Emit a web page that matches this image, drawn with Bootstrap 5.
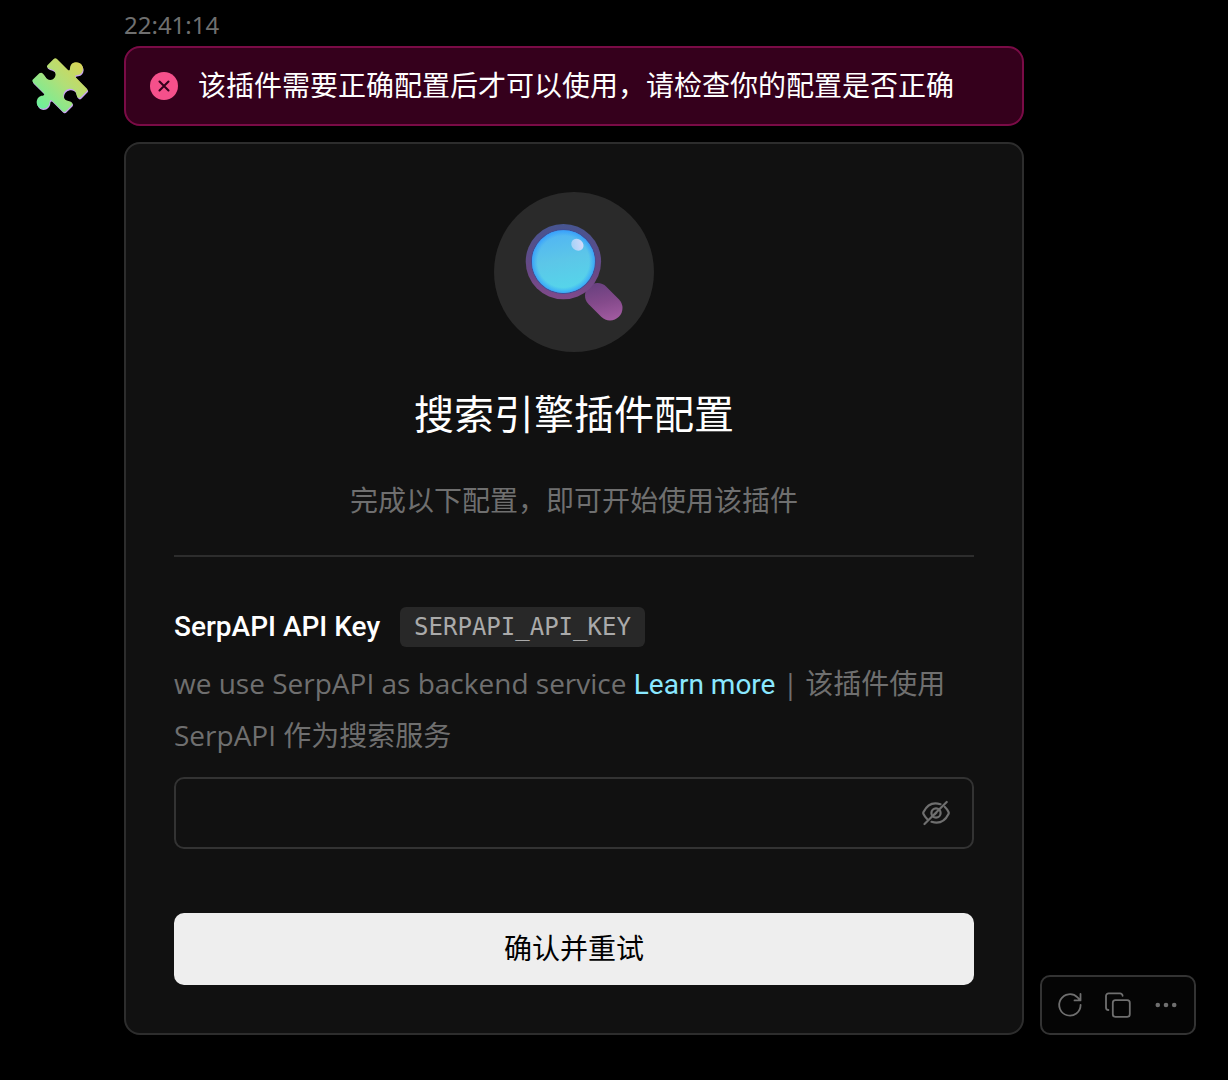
<!DOCTYPE html>
<html lang="zh-CN" data-bs-theme="dark">
<head>
<meta charset="utf-8">
<meta name="viewport" content="width=device-width, initial-scale=1">
<title>搜索引擎插件配置</title>
<link href="https://cdn.jsdelivr.net/npm/bootstrap@5.3.0/dist/css/bootstrap.min.css" rel="stylesheet">
<style>
body{background:#000;color:#fff;font-family:"Noto Sans","Noto Sans CJK SC",sans-serif;font-size:28px;line-height:48px}
.chat-item{padding:6px 32px 46px 20px}
.avatar{width:80px;height:80px;margin-top:40px;margin-right:24px}
.chat-main{min-width:0}
.stamp{font-size:24px;line-height:38px;padding-bottom:2px;color:#6f6f6f}
.notice{background:#35001c;border:2px solid #7a0b46;border-radius:16px;min-height:80px;padding:14px 24px;gap:20px}
.notice span{line-height:46px;padding-bottom:2px}
.panel{background:#111;border:2px solid #2d2d2d;border-radius:16px;padding:48px;margin-top:16px}
.plugin-title{font-size:40px;line-height:60px;font-weight:400;margin:32px 0}
.muted-text{color:#6f6f6f}
.divider{border:0;border-top:2px solid #2d2d2d;opacity:1;margin:31px 0 50px}
.field-head{gap:20px}
.field-name{font-weight:500;line-height:40px}
.key-tag{font-family:"DejaVu Sans Mono",monospace;font-size:24px;line-height:40px;color:#aaa;background:#282828;border-radius:6px;padding:0 14px}
.field-desc{color:#6f6f6f;line-height:51px;margin:11px 0 16px;font-family:"Open Sans","Noto Sans CJK SC",sans-serif}
.field-name,.field-desc a{font-family:Roboto,"Noto Sans CJK SC",sans-serif}
.field-desc a{color:#8ae8ff}
.key-box{border:2px solid #333;border-radius:10px;height:72px;padding:0 22px}
.key-box input{background:none;border:0;outline:0;color:#fff;min-width:0}
.bare{background:none;border:0;padding:0;line-height:0;color:#6f6f6f}
.confirm{background:#eee;color:#000;border:0;border-radius:10px;height:72px;padding:0 0 2px;font-size:28px;margin-top:64px}
.confirm:hover{background:#fff;color:#000}
.tools{background:#050505;border:2px solid #333;border-radius:10px;padding:12px;gap:16px;margin-left:16px}
</style>
</head>
<body>
<article class="chat-item d-flex">
  <svg class="avatar flex-shrink-0" viewBox="30 138 240 240" aria-hidden="true">
    <defs>
      <linearGradient id="pz" x1="0" y1="1" x2="1" y2="0"><stop offset=".1" stop-color="#6bf09c"/><stop offset=".55" stop-color="#b2df77"/><stop offset="1" stop-color="#e3d04b"/></linearGradient>
      <path id="piece" d="M68 239 88 220Q94 216 99 221L105 229C111 240 120 243 129 238C139 231 139 217 131 211Q126 208 118 206C110 203 109 199 113 195L131 177Q136 172 141 177L174 210Q180 214 180 205C181 192 190 186 200 187C212 188 219 196 219 207C218 218 212 224 203 225Q193 225 197 232L231 266Q234 270 231 273L212 292Q207 297 202 291C200 288 199 280 196 274C190 265 177 264 168 271C158 279 158 293 166 299C171 303 180 303 184 306Q190 310 186 315L168 333Q163 338 158 334L125 301Q119 298 119 306C118 318 110 326 99 326C87 325 80 317 80 306C81 294 88 287 98 287Q106 286 101 279L69 247Q65 243 68 239Z"/>
    </defs>
    <use href="#piece" x="2" y="4" fill="#c9a3f2"/>
    <use href="#piece" fill="url(#pz)"/>
  </svg>
  <div class="chat-main flex-grow-1">
    <time class="stamp d-block">22:41:14</time>
    <div class="notice d-flex align-items-center" role="alert">
      <svg class="flex-shrink-0" width="28" height="28" viewBox="0 0 28 28" aria-hidden="true"><circle cx="14" cy="14" r="14" fill="#f5508b"/><path d="m9.500 9.500 9 9m0-9-9 9" stroke="#35001c" stroke-width="2.100" stroke-linecap="round"/></svg>
      <span>该插件需要正确配置后才可以使用，请检查你的配置是否正确</span>
    </div>
    <section class="panel">
      <div class="text-center">
        <svg class="d-block mx-auto" width="160" height="160" viewBox="0 0 160 160" aria-hidden="true">
          <defs>
            <linearGradient id="rim" x1="0" y1="0" x2="0" y2="1"><stop offset="0" stop-color="#465591"/><stop offset=".6" stop-color="#674884"/><stop offset="1" stop-color="#804a8b"/></linearGradient>
            <linearGradient id="glassFill" x1=".2" y1="0" x2=".4" y2="1"><stop offset="0" stop-color="#4fb2f5"/><stop offset=".5" stop-color="#5cc6e8"/><stop offset="1" stop-color="#55d6ea"/></linearGradient>
            <radialGradient id="glassEdge"><stop offset=".82" stop-color="#2f9cff" stop-opacity="0"/><stop offset="1" stop-color="#2f98ff" stop-opacity=".75"/></radialGradient>
            <linearGradient id="grip" gradientUnits="userSpaceOnUse" x1="106" y1="92" x2="114" y2="128"><stop offset="0" stop-color="#6b4180"/><stop offset=".5" stop-color="#844a8b"/><stop offset="1" stop-color="#a05a9f"/></linearGradient>
            <linearGradient id="shine" x1="1" y1="0" x2="0" y2="1"><stop offset="0" stop-color="#dcdcfb"/><stop offset="1" stop-color="#9bd0f7"/></linearGradient>
          </defs>
          <circle cx="80" cy="80" r="80" fill="#2a2a2a"/>
          <path d="m103.500 103.500 12.500 12.500" stroke="url(#grip)" stroke-width="25" stroke-linecap="round"/>
          <circle cx="69.400" cy="69.600" r="37.700" fill="url(#rim)"/>
          <circle cx="69.400" cy="69.600" r="32.300" fill="#3c4f9c"/>
          <circle cx="69.400" cy="69.600" r="31.400" fill="url(#glassFill)"/>
          <circle cx="69.400" cy="69.600" r="31.400" fill="url(#glassEdge)"/>
          <ellipse cx="83.400" cy="52.800" rx="6.500" ry="5.600" transform="rotate(40 83.400 52.800)" fill="url(#shine)"/>
        </svg>
        <h1 class="plugin-title">搜索引擎插件配置</h1>
        <div class="muted-text">完成以下配置，即可开始使用该插件</div>
      </div>
      <hr class="divider">
      <form>
        <div class="field-head d-flex align-items-center">
          <label class="field-name" for="apiKey">SerpAPI API Key</label>
          <span class="key-tag">SERPAPI_API_KEY</span>
        </div>
        <p class="field-desc">we use SerpAPI as backend service <a class="text-decoration-none" href="#">Learn more</a> | 该插件使用 SerpAPI 作为搜索服务</p>
        <div class="key-box d-flex align-items-center">
          <input class="flex-grow-1" id="apiKey" type="password" autocomplete="off">
          <button class="bare" type="button" aria-label="显示">
            <svg width="28" height="28" viewBox="0 0 28 28" fill="none" stroke="currentColor" stroke-width="2.200" stroke-linecap="round"><ellipse cx="14" cy="14" rx="4.600" ry="4.700"/><path d="M18.500 5.200C10 2.500 4.500 7 1.500 13q-.5 1 0 2c1 2 2.200 3.700 3.600 5M9.500 22.800C18 25.500 23.500 21 26.500 15q.5-1 0-2c-1-2-2.200-3.700-3.600-5M14.300 13.700l-2 2M2.500 25 24.700 3"/></svg>
          </button>
        </div>
        <button class="btn confirm w-100" type="button">确认并重试</button>
      </form>
    </section>
  </div>
  <div class="tools d-flex align-self-end flex-shrink-0">
    <button class="bare" type="button" aria-label="重试"><svg width="32" height="32" viewBox="0 0 32 32" fill="none" stroke="currentColor" stroke-width="1.800" stroke-linecap="round" stroke-linejoin="round"><path d="M26.600 16A10.700 10.700 0 1 1 23.500 8.400L26.500 11.400M26.500 5v6.400h-6"/></svg></button>
    <button class="bare" type="button" aria-label="复制"><svg width="32" height="32" viewBox="0 0 32 32" fill="none" stroke="currentColor" stroke-width="1.800" stroke-linecap="round" stroke-linejoin="round"><rect x="10.800" y="11.200" width="17" height="16.600" rx="2.600"/><path d="M6.400 21A2.500 2.500 0 0 1 4 18.500V7a2.600 2.600 0 0 1 2.600-2.600H18A2.500 2.500 0 0 1 20.600 6.800"/></svg></button>
    <button class="bare" type="button" aria-label="更多"><svg width="32" height="32" viewBox="0 0 32 32" fill="currentColor"><circle cx="7.800" cy="16" r="2.300"/><circle cx="16" cy="16" r="2.300"/><circle cx="24.200" cy="16" r="2.300"/></svg></button>
  </div>
</article>
<script src="https://cdn.jsdelivr.net/npm/bootstrap@5.3.0/dist/js/bootstrap.bundle.min.js"></script>
</body>
</html>
